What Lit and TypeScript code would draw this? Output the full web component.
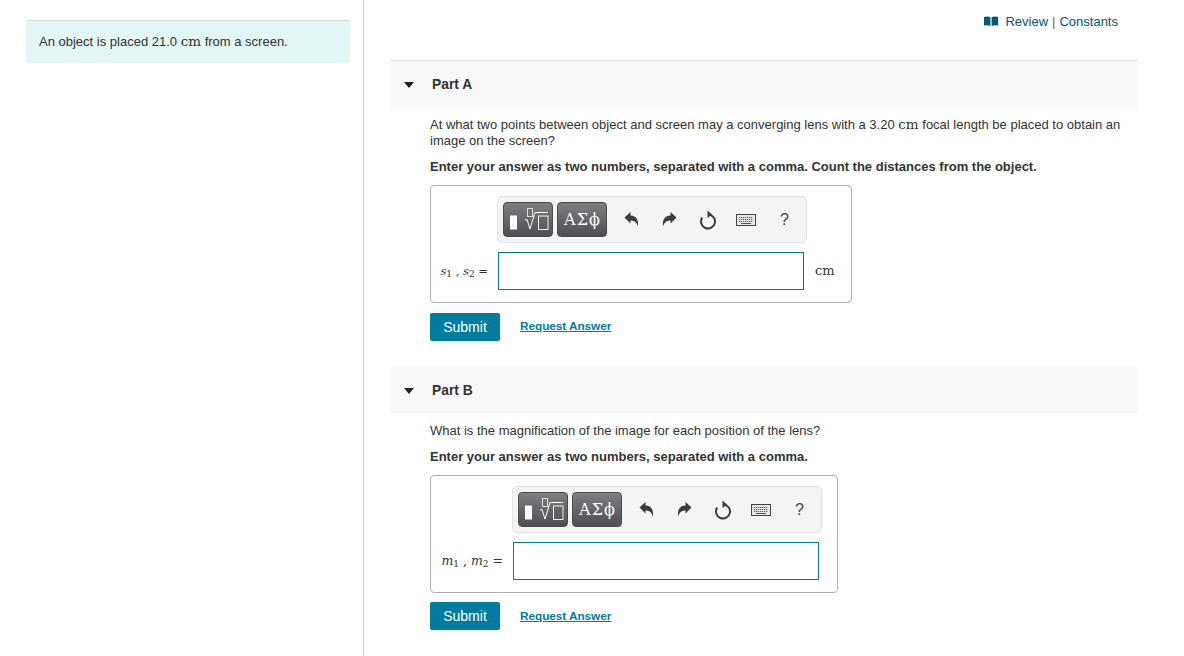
import { LitElement, html, css, svg } from "lit";
import { customElement } from "lit/decorators.js";

const undo = svg`<path d="M0.5 5.5 L6.5 0 V3.5 C11.5 3.5 15 7 13.8 14.5 C12.8 10.5 10.5 8.5 6.5 8.5 V11.5 Z" fill="#3c3c3c"/>`;

@customElement("app-root")
export class AppRoot extends LitElement {
  static styles = css`
    :host { display: flex; width: 1184px; height: 656px; overflow: hidden; background: #fff; font-family: "Liberation Sans", Arial, sans-serif; font-size: 13px; color: #333; }
    .left { width: 364px; height: 656px; box-sizing: border-box; border-right: 1px solid #c8ccd2; padding: 20px 13px 0 26px; flex: none; }
    .intro { height: 43px; box-sizing: border-box; background: #e2f6f6; border-top: 1px solid #d9dde0; padding: 13px 13px 0; line-height: 15px; }
    .cm { font-family: "DejaVu Serif", serif; font-size: 13.5px; line-height: 1; }
    .right { width: 748px; margin-left: 26px; flex: none; }
    .top { box-sizing: border-box; padding: 14px 20px 0 0; display: flex; justify-content: flex-end; align-items: center; height: 28px; color: #00596e; gap: 4px; line-height: 15px; margin-bottom: 32px; }
    .top svg { margin-right: 3px; }
    .top .sep { color: #666; }
    .head { height: 47px; box-sizing: border-box; background: #f9f9f9; border-top: 1px solid #e3e3e3; display: flex; align-items: center; font-weight: bold; color: #333; font-size: 13.8px; padding-left: 14px; gap: 18px; }
    .head.b { height: 46px; border-top: none; }
    .tri { width: 0; height: 0; border-left: 5.5px solid transparent; border-right: 5.5px solid transparent; border-top: 6px solid #222; margin-top: 1px; }
    .body { padding-left: 40px; }
    p { margin: 0; line-height: 16px; }
    .q { padding-top: 10px; width: 700px; }
    .b-q { padding-top: 10px; }
    .hint { font-weight: bold; margin-top: 10px; }
    .box { margin-top: 10px; height: 118px; box-sizing: border-box; border: 1px solid #b0b0b0; border-radius: 4px; display: flex; flex-direction: column; align-items: flex-start; padding: 10px 0 0 0; }
    .box.a { width: 422px; }
    .box.bb { width: 408px; }
    .tools { height: 47px; box-sizing: border-box; width: 310px; background: #f4f4f4; border: 1px solid #e2e2e2; border-radius: 5px; display: flex; align-items: center; padding-left: 5px; }
    .a .tools { margin-left: 66px; }
    .bb .tools { margin-left: 81px; }
    .tb { height: 35px; box-sizing: border-box; border-radius: 4px; background: linear-gradient(#7f7f83, #4f4f53); border: 1px solid #4a4a4a; display: flex; align-items: center; justify-content: center; color: #fff; flex: none; }
    .t1 { width: 50px; margin-right: 4px; }
    .t2 { width: 50px; font-family: "DejaVu Serif", "Liberation Serif", serif; font-size: 16px; letter-spacing: 1px; padding-left: 1px; }
    .ic { display: flex; align-items: center; justify-content: center; width: 38.3px; height: 34px; color: #444; font-size: 16px; flex: none; }
    .ic.first { margin-left: 5px; }
    .ic.q-mark { font-family: "Liberation Sans", sans-serif; }
    .row { display: flex; align-items: center; margin-top: 9px; width: 100%; height: 38px; }
    .lbl { font-family: "DejaVu Serif", serif; font-size: 11.5px; color: #333; box-sizing: border-box; text-align: right; white-space: pre; flex: none; padding-right: 10px; margin-top: -1px; }
    .lbl.wide { font-size: 12.5px; }
    .lbl sub { font-size: 9px; line-height: 0; vertical-align: -2px; }
    .a .lbl { width: 67px; }
    .bb .lbl { width: 82px; }
    .input { width: 306px; height: 38px; box-sizing: border-box; border: 1px solid #007c9b; background: #fff; flex: none; }
    .unit { margin-left: 11px; margin-top: -1px; font-size: 13px; }
    .acts { display: flex; align-items: center; margin-top: 10px; gap: 20px; height: 28px; }
    .sub { width: 70px; height: 28px; border-radius: 2px; background: #007c9f; color: #fff; font-size: 14px; display: flex; align-items: center; justify-content: center; }
    .req { color: #007c9f; font-weight: bold; font-size: 11.8px; letter-spacing: -0.05px; text-decoration: underline; margin-bottom: 2px; }
    .gap { height: 26px; }
    .acts.b { margin-top: 9px; }
    .acts.b .req { margin-bottom: 0; }
  `;

  private toolbar() {
    return html`<div class="tools">
      <div class="tb t1"><svg width="46" height="28" viewBox="0 0 46 28">
        <rect x="5" y="9.5" width="7" height="14" fill="#fff"/>
        <rect x="22.5" y="2.5" width="5" height="8" fill="none" stroke="#ddd" stroke-width="1"/>
        <path d="M20 14 L22 13.5 L25 23 L30 6.5 H43" fill="none" stroke="#fff" stroke-width="1"/>
        <rect x="33.5" y="10" width="9.5" height="13.5" fill="none" stroke="#eee" stroke-width="1"/>
      </svg></div>
      <div class="tb t2">ΑΣϕ</div>
      <div class="ic first"><svg width="15" height="15" viewBox="0 0 15 15">${undo}</svg></div>
      <div class="ic"><svg width="15" height="15" viewBox="0 0 15 15"><g transform="translate(15 0) scale(-1 1)">${undo}</g></svg></div>
      <div class="ic"><svg width="18" height="20" viewBox="0 0 18 20"><path d="M9 4.5 A7 7 0 1 1 3.2 7.6" fill="none" stroke="#3c3c3c" stroke-width="2"/><path d="M8.5 0.5 L13 4.5 L8.5 8 Z" fill="#3c3c3c"/></svg></div>
      <div class="ic"><svg width="20" height="12" viewBox="0 0 20 12"><rect x="0.5" y="0.5" width="19" height="11" fill="#e8e8e8" stroke="#444"/><path d="M3 3.5 H17 M3 5.5 H17 M3 7.5 H17" stroke="#555" stroke-dasharray="1.2 .8" fill="none"/><path d="M5 9.5 H15" stroke="#555"/></svg></div>
      <div class="ic q-mark">?</div>
    </div>`;
  }

  render() {
    return html`
      <div class="left"><div class="intro">An object is placed 21.0 <span class="cm">cm</span> from a screen.</div></div>
      <div class="right">
        <div class="top">
          <svg width="14" height="10" viewBox="0 0 14 10"><path d="M0 1 Q3.5 0 6.4 1.2 V10 Q3.5 8.8 0 9.6 Z M7.6 1.2 Q10.5 0 14 1 V9.6 Q10.5 8.8 7.6 10 Z" fill="#00596e"/></svg>
          <span>Review</span><span class="sep">|</span><span>Constants</span>
        </div>
        <div class="head"><span class="tri"></span><span>Part A</span></div>
        <div class="body">
          <p class="q">At what two points between object and screen may a converging lens with a 3.20 <span class="cm">cm</span> focal length be placed to obtain an image on the screen?</p>
          <p class="hint">Enter your answer as two numbers, separated with a comma. Count the distances from the object.</p>
          <div class="box a">
            ${this.toolbar()}
            <div class="row"><span class="lbl"><i>s</i><sub>1</sub> , <i>s</i><sub>2</sub> =</span><div class="input"></div><span class="cm unit">cm</span></div>
          </div>
          <div class="acts"><div class="sub">Submit</div><span class="req">Request Answer</span></div>
        </div>
        <div class="gap"></div>
        <div class="head b"><span class="tri"></span><span>Part B</span></div>
        <div class="body">
          <p class="b-q">What is the magnification of the image for each position of the lens?</p>
          <p class="hint">Enter your answer as two numbers, separated with a comma.</p>
          <div class="box bb">
            ${this.toolbar()}
            <div class="row"><span class="lbl wide"><i>m</i><sub>1</sub> , <i>m</i><sub>2</sub> =</span><div class="input"></div></div>
          </div>
          <div class="acts b"><div class="sub">Submit</div><span class="req">Request Answer</span></div>
        </div>
      </div>
    `;
  }
}
